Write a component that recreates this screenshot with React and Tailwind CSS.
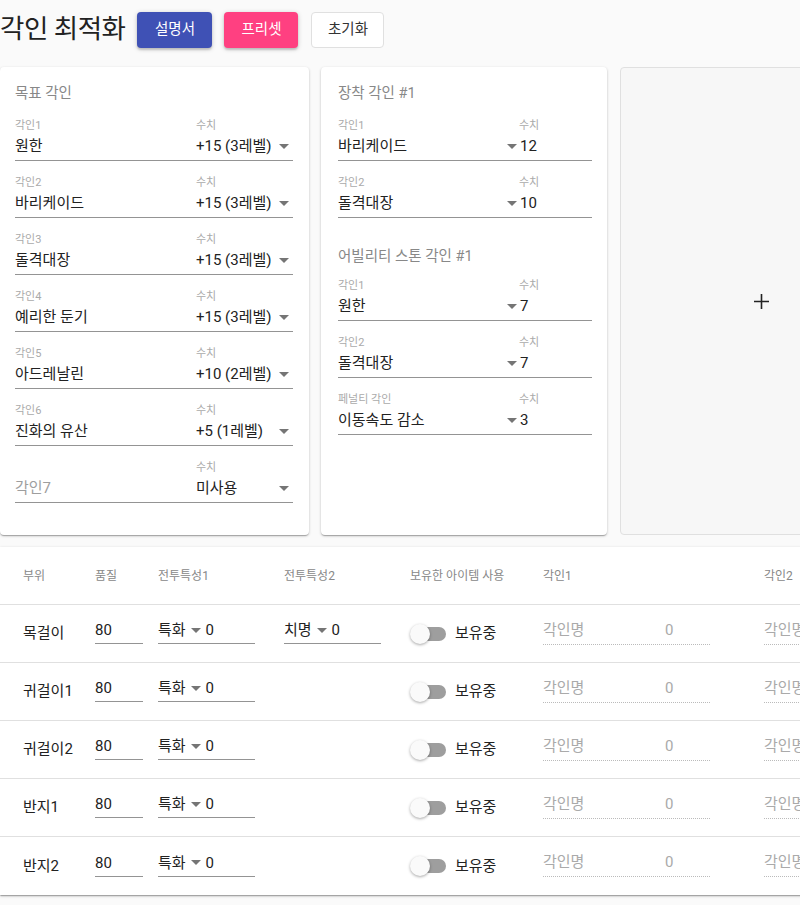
import React from 'react';

const Arrow = () => (
  <svg width="10" height="5" viewBox="0 0 10 5" className="shrink-0">
    <path d="M0 0l5 5 5-5z" fill="#757575" />
  </svg>
);

const targets = [
  { label: '각인1', value: '원한', level: '+15 (3레벨)' },
  { label: '각인2', value: '바리케이드', level: '+15 (3레벨)' },
  { label: '각인3', value: '돌격대장', level: '+15 (3레벨)' },
  { label: '각인4', value: '예리한 둔기', level: '+15 (3레벨)' },
  { label: '각인5', value: '아드레날린', level: '+10 (2레벨)' },
  { label: '각인6', value: '진화의 유산', level: '+5 (1레벨)' },
];

const TargetRow = ({ label, value, level, placeholder }) => (
  <div className="flex border-b border-[#949494]">
    <div className="flex-1 flex flex-col">
      <div className="text-[11px] leading-[14px] text-[#aaa]">{label || '\u00a0'}</div>
      <div className={`mt-[2px] pb-[3px] text-[15px] leading-[22px] ${placeholder ? 'text-[#9e9e9e]' : 'text-[#222]'}`}>
        {value}
      </div>
    </div>
    <div className="w-[97px] flex flex-col">
      <div className="text-[11px] leading-[14px] text-[#aaa]">수치</div>
      <div className="mt-[2px] pb-[3px] pr-[4px] flex items-center justify-between text-[15px] leading-[22px] text-[#222]">
        <span>{level}</span>
        <Arrow />
      </div>
    </div>
  </div>
);

const EquipRow = ({ label, value, num }) => (
  <div className="flex border-b border-[#949494]">
    <div className="flex-1 flex flex-col">
      <div className="text-[11px] leading-[14px] text-[#aaa]">{label}</div>
      <div className="mt-[2px] pb-[3px] pr-[2px] flex items-center justify-between text-[15px] leading-[22px] text-[#222]">
        <span>{value}</span>
        <Arrow />
      </div>
    </div>
    <div className="w-[73px] flex flex-col">
      <div className="text-[11px] leading-[14px] text-[#aaa]">수치</div>
      <div className="mt-[2px] pb-[3px] pl-[1px] text-[15px] leading-[22px] text-[#222]">{num}</div>
    </div>
  </div>
);

const Toggle = () => (
  <div className="relative w-[36px] h-[20px] shrink-0">
    <div className="absolute left-[2px] top-[3px] w-[34px] h-[14px] rounded-full bg-[#9e9e9e]" />
    <div className="absolute left-0 top-0 w-[20px] h-[20px] rounded-full bg-[#fafafa] shadow-[0_1px_3px_rgba(0,0,0,0.35)]" />
  </div>
);

const EngravingInput = ({ width = 167 }) => (
  <div className="flex border-b border-dotted border-[#bbb] pb-[3px] mb-[4px]" style={{ width }}>
    <div className="flex-1 text-[15px] leading-[22px] text-[#aaa]">각인명</div>
    <div className="w-[60px] pl-[15px] text-[15px] leading-[22px] text-[#aaa]">0</div>
  </div>
);

const parts = [
  { name: '목걸이', b2: true },
  { name: '귀걸이1' },
  { name: '귀걸이2' },
  { name: '반지1' },
  { name: '반지2' },
];

const SelectBox = ({ label }) => (
  <div className="w-[97px] flex items-center gap-[5px] border-b border-[#949494] pb-[2px] mb-[4px] text-[15px] leading-[22px] text-[#222]">
    <span>{label}</span>
    <Arrow />
    <span>0</span>
  </div>
);

const shadow = 'shadow-[0_1px_3px_rgba(0,0,0,0.2),0_1px_1px_rgba(0,0,0,0.14),0_2px_1px_-1px_rgba(0,0,0,0.12)]';

export default function App() {
  return (
    <div className="w-[800px] h-[905px] overflow-hidden bg-[#fafafa] [font-family:Roboto,'Noto_Sans_CJK_KR',sans-serif]">
      {/* header */}
      <div className="h-[60px] pt-[12px] flex items-start">
        <div className="h-[36px] flex items-center">
          <h1 className="text-[26.5px] leading-[32px] text-[#222] tracking-[-0.5px] -mt-[3px]">각인 최적화</h1>
          <button className="ml-[12px] w-[75px] h-[36px] rounded-[4px] bg-[#3f51b5] text-white text-[14.5px] shadow-[0_1px_5px_rgba(0,0,0,0.2),0_2px_2px_rgba(0,0,0,0.14)]">
            설명서
          </button>
          <button className="ml-[12px] w-[74px] h-[36px] rounded-[4px] bg-[#ff4081] text-white text-[14.5px] shadow-[0_1px_5px_rgba(0,0,0,0.2),0_2px_2px_rgba(0,0,0,0.14)]">
            프리셋
          </button>
          <button className="ml-[13px] w-[73px] h-[36px] rounded-[4px] bg-white border border-[#e0e0e0] text-[#333] text-[14.5px]">
            초기화
          </button>
        </div>
      </div>

      {/* cards */}
      <div className="mt-[7px] flex h-[468px]">
        <div className={`w-[309px] shrink-0 bg-white rounded-[4px] ${shadow} pl-[15px] pr-[16px] pt-[16px]`}>
          <div className="text-[14.5px] leading-[22px] text-[#888]">목표 각인</div>
          <div className="mt-[14px] flex flex-col gap-[15px]">
            {targets.map((t) => (
              <TargetRow key={t.label} {...t} />
            ))}
            <TargetRow label="" value="각인7" level="미사용" placeholder />
          </div>
        </div>

        <div className={`ml-[12px] w-[286px] shrink-0 bg-white rounded-[4px] ${shadow} pl-[17px] pr-[15px] pt-[16px]`}>
          <div className="text-[14.5px] leading-[22px] text-[#888]">장착 각인 #1</div>
          <div className="mt-[14px] flex flex-col gap-[15px]">
            <EquipRow label="각인1" value="바리케이드" num="12" />
            <EquipRow label="각인2" value="돌격대장" num="10" />
          </div>
          <div className="mt-[28px] text-[14.5px] leading-[22px] text-[#888]">어빌리티 스톤 각인 #1</div>
          <div className="mt-[11px] flex flex-col gap-[15px]">
            <EquipRow label="각인1" value="원한" num="7" />
            <EquipRow label="각인2" value="돌격대장" num="7" />
            <EquipRow label="페널티 각인" value="이동속도 감소" num="3" />
          </div>
        </div>

        <div className="ml-[13px] w-[220px] shrink-0 bg-[#f7f7f7] border border-[#e0e0e0] rounded-[4px] flex items-center pl-[133px]">
          <svg width="15" height="15" viewBox="0 0 15 15">
            <path d="M7.5 0v15M0 7.5h15" stroke="#222" strokeWidth="1.6" />
          </svg>
        </div>
      </div>

      {/* table */}
      <div className={`mt-[12px] w-[1000px] bg-white ${shadow}`}>
        <div className="h-[58px] flex items-center border-b border-[#e0e0e0] text-[12px] text-[#888]">
          <div className="w-[95px] pl-[23px]">부위</div>
          <div className="w-[63px]">품질</div>
          <div className="w-[126px]">전투특성1</div>
          <div className="w-[126px]">전투특성2</div>
          <div className="w-[133px]">보유한 아이템 사용</div>
          <div className="w-[221px]">각인1</div>
          <div className="flex-1">각인2</div>
        </div>
        {parts.map((p, i) => (
          <div
            key={p.name}
            className={`h-[58px] flex items-center ${i < parts.length - 1 ? 'border-b border-[#e0e0e0]' : ''}`}
          >
            <div className="w-[95px] pl-[23px] text-[15px] text-[#222]">{p.name}</div>
            <div className="w-[63px]">
              <div className="w-[48px] border-b border-[#949494] pb-[2px] mb-[4px] text-[15px] leading-[22px] text-[#222]">80</div>
            </div>
            <div className="w-[126px]">
              <SelectBox label="특화" />
            </div>
            <div className="w-[126px]">{p.b2 && <SelectBox label="치명" />}</div>
            <div className="w-[133px] flex items-center gap-[9px]">
              <Toggle />
              <span className="text-[15px] text-[#222]">보유중</span>
            </div>
            <div className="w-[221px]">
              <EngravingInput />
            </div>
            <div className="flex-1">
              <EngravingInput />
            </div>
          </div>
        ))}
      </div>
    </div>
  );
}
